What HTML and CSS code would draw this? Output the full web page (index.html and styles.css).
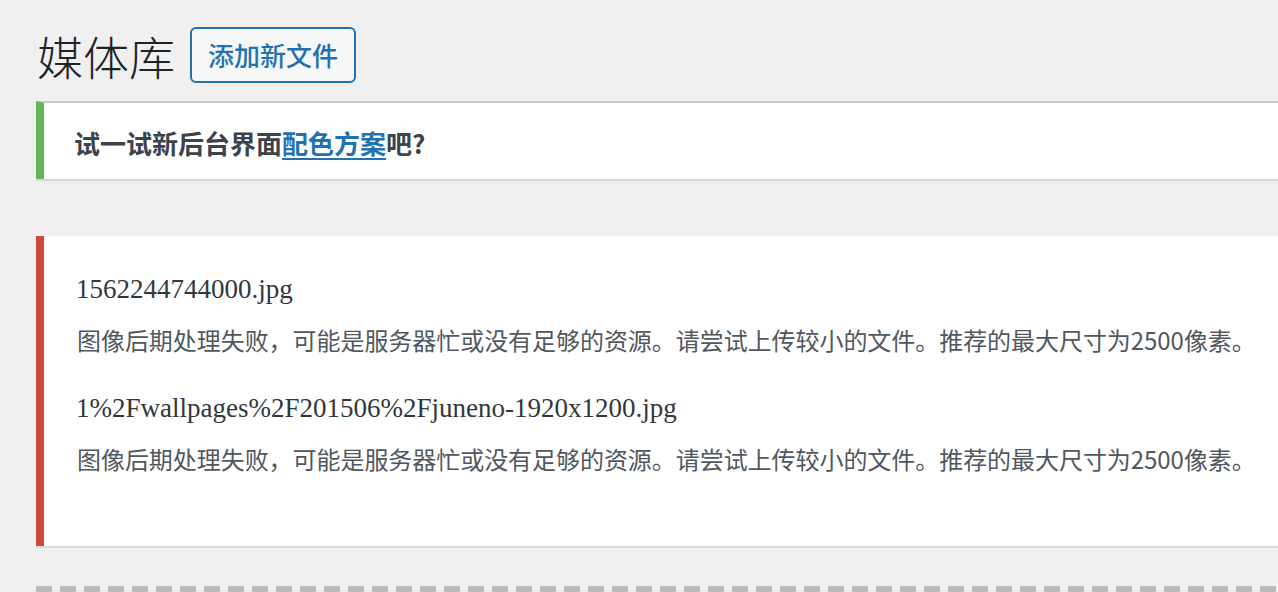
FILE: index.html
```html
<!DOCTYPE html>
<html lang="zh-CN">
<head>
<meta charset="utf-8">
<title>媒体库</title>
<link rel="stylesheet" href="styles.css">
</head>
<body>
<div class="wrap">
  <div class="header">
    <h1 class="title">媒体库</h1>
    <a class="btn" href="#">添加新文件</a>
  </div>
  <div class="notice notice-success">
    <p>试一试新后台界面<a href="#">配色方案</a>吧?</p>
  </div>
  <div class="notice-error">
    <div class="err-item">
      <p class="err-name">1562244744000.jpg</p>
      <p class="err-msg">图像后期处理失败，可能是服务器忙或没有足够的资源。请尝试上传较小的文件。推荐的最大尺寸为2500像素。</p>
    </div>
    <div class="err-item">
      <p class="err-name">1%2Fwallpages%2F201506%2Fjuneno-1920x1200.jpg</p>
      <p class="err-msg">图像后期处理失败，可能是服务器忙或没有足够的资源。请尝试上传较小的文件。推荐的最大尺寸为2500像素。</p>
    </div>
  </div>
  <div class="dropzone"></div>
</div>
</body>
</html>
```
FILE: styles.css
```css
html, body {
  margin: 0;
  padding: 0;
  background: #f0f0f1;
  overflow: hidden;
}
body {
  font-family: "Liberation Serif", "Noto Sans CJK SC", serif;
  color: #3c434a;
}
.wrap {
  padding-left: 36px;
}
.header {
  display: flex;
  align-items: center;
  gap: 15px;
  margin-top: 27px;
  height: 56px;
}
.title {
  margin: 0;
  font-family: "Noto Sans CJK SC", sans-serif;
  font-weight: 300;
  font-size: 46px;
  line-height: 56px;
  color: #1d2327;
  padding-left: 1px;
}
.btn {
  display: inline-block;
  box-sizing: border-box;
  height: 56px;
  line-height: 52px;
  padding: 0 16px;
  border: 2px solid #2271b1;
  border-radius: 6px;
  background: #f6f7f7;
  color: #2271b1;
  font-family: "Noto Sans CJK SC", sans-serif;
  font-weight: 500;
  font-size: 26px;
  text-decoration: none;
}
.notice {
  margin-top: 18px;
  background: #fff;
  border-top: 2px solid #c8c9cc;
  border-left: 8px solid #65b35b;
  box-shadow: 0 2px 0 #d5d6d8;
  padding: 4px 0 0 30px;
  height: 72px;
  box-sizing: content-box;
}
.notice p {
  margin: 0;
  line-height: 72px;
  font-family: "Noto Sans CJK SC", sans-serif;
  font-weight: 700;
  font-size: 26px;
  color: #3c434a;
}
.notice a {
  color: #2271b1;
  text-decoration: underline;
  text-underline-offset: 4px;
  text-decoration-thickness: 2px;
}
.notice-error {
  margin-top: 57px;
  background: #fff;
  border-left: 8px solid #cf4a3e;
  box-shadow: 0 2px 0 #dcdcde;
  padding: 33px 0 67px 32px;
  display: flex;
  flex-direction: column;
  gap: 28px;
}
.err-item {
  display: flex;
  flex-direction: column;
  gap: 11px;
}
.err-name {
  margin: 0;
  font-size: 27px;
  line-height: 40px;
  color: #32373c;
}
.err-msg {
  margin: 0;
  padding-left: 1px;
  font-family: "Noto Sans CJK SC", sans-serif;
  font-weight: 400;
  font-size: 24px;
  letter-spacing: -0.05px;
  line-height: 40px;
  color: #50575e;
  white-space: nowrap;
}
.dropzone {
  margin-top: 40px;
  height: 8px;
  background: repeating-linear-gradient(to right, #b8bbbf 0 16px, transparent 16px 24px);
}
```
